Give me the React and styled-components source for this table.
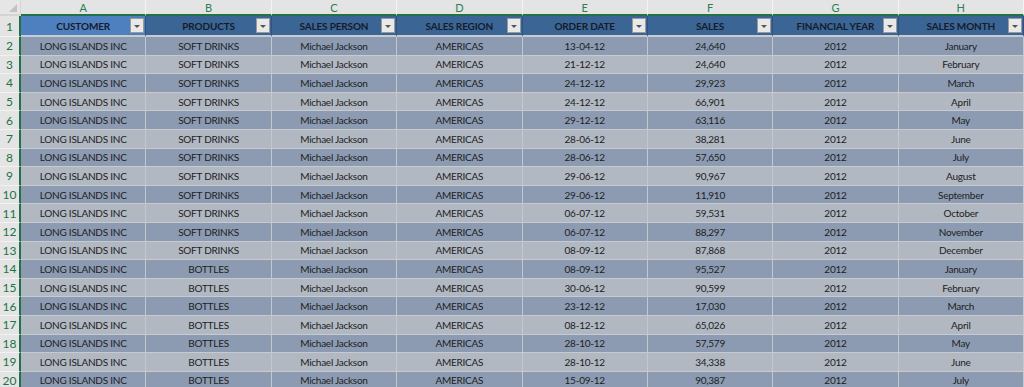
import React from "react";
import styled, { createGlobalStyle } from "styled-components";

const GlobalStyle = createGlobalStyle`
  html, body {
    margin: 0;
    padding: 0;
    background: #ffffff;
    overflow: hidden;
  }
  body {
    font-family: Lato, "Open Sans", sans-serif;
  }
`;

const COLUMNS = [
  { letter: "A", title: "CUSTOMER" },
  { letter: "B", title: "PRODUCTS" },
  { letter: "C", title: "SALES PERSON" },
  { letter: "D", title: "SALES REGION" },
  { letter: "E", title: "ORDER DATE" },
  { letter: "F", title: "SALES" },
  { letter: "G", title: "FINANCIAL YEAR" },
  { letter: "H", title: "SALES MONTH" },
];

const raw = [
  ["SOFT DRINKS", "13-04-12", "24,640", "January"],
  ["SOFT DRINKS", "21-12-12", "24,640", "February"],
  ["SOFT DRINKS", "24-12-12", "29,923", "March"],
  ["SOFT DRINKS", "24-12-12", "66,901", "April"],
  ["SOFT DRINKS", "29-12-12", "63,116", "May"],
  ["SOFT DRINKS", "28-06-12", "38,281", "June"],
  ["SOFT DRINKS", "28-06-12", "57,650", "July"],
  ["SOFT DRINKS", "29-06-12", "90,967", "August"],
  ["SOFT DRINKS", "29-06-12", "11,910", "September"],
  ["SOFT DRINKS", "06-07-12", "59,531", "October"],
  ["SOFT DRINKS", "06-07-12", "88,297", "November"],
  ["SOFT DRINKS", "08-09-12", "87,868", "December"],
  ["BOTTLES", "08-09-12", "95,527", "January"],
  ["BOTTLES", "30-06-12", "90,599", "February"],
  ["BOTTLES", "23-12-12", "17,030", "March"],
  ["BOTTLES", "08-12-12", "65,026", "April"],
  ["BOTTLES", "28-10-12", "57,579", "May"],
  ["BOTTLES", "28-10-12", "34,338", "June"],
  ["BOTTLES", "15-09-12", "90,387", "July"],
];

const rows = raw.map(([product, date, sales, month]) => [
  "LONG ISLANDS INC",
  product,
  "Michael Jackson",
  "AMERICAS",
  date,
  sales,
  "2012",
  month,
]);

const App = () => {
  return (
    <>
      <GlobalStyle />
      <Sheet>
        <Row>
          <Corner>
            <CornerMark />
          </Corner>
          {COLUMNS.map((c) => (
            <ColLetter key={c.letter}>{c.letter}</ColLetter>
          ))}
        </Row>
        <HeadRow>
          <RowNum>1</RowNum>
          {COLUMNS.map((c, i) => (
            <HeadCell key={c.letter} $active={i === 0}>
              <span>{c.title}</span>
              <FilterButton>
                <Caret />
              </FilterButton>
            </HeadCell>
          ))}
        </HeadRow>
        {rows.map((r, i) => (
          <DataRow key={i}>
            <RowNum>{i + 2}</RowNum>
            {r.map((v, j) => (
              <Cell key={j} $dark={i % 2 === 0}>
                {v}
              </Cell>
            ))}
          </DataRow>
        ))}
      </Sheet>
    </>
  );
};

export default App;

const Sheet = styled.div`
  width: 1024px;
  height: 387px;
  overflow: hidden;
  background: #ffffff;
`;

const Row = styled.div`
  display: grid;
  grid-template-columns: 21px repeat(8, 1fr);
  height: 16px;
`;

const HeadRow = styled(Row)`
  height: 21px;
`;

const DataRow = styled(Row)`
  height: 18.6px;
`;

const Corner = styled.div`
  position: relative;
  background: #e6e6e6;
  border-right: 1px solid #d4d4d4;
  border-bottom: 2px solid #d4d4d4;
  box-sizing: border-box;
`;

const CornerMark = styled.div`
  position: absolute;
  right: 3px;
  bottom: 2px;
  width: 0;
  height: 0;
  border-left: 8px solid transparent;
  border-bottom: 8px solid #c2c2c2;
`;

const ColLetter = styled.div`
  display: flex;
  align-items: center;
  justify-content: center;
  box-sizing: border-box;
  background: #e4e4e4;
  border-right: 1px solid #f4f4f4;
  border-bottom: 2px solid #217346;
  color: #2e7d55;
  font-family: Lato, sans-serif;
  font-size: 11px;
  padding-top: 1px;
`;

const RowNum = styled.div`
  display: flex;
  align-items: center;
  justify-content: center;
  box-sizing: border-box;
  background: #e4e4e4;
  border-right: 2px solid #217346;
  border-bottom: 1px solid #f2f2f2;
  color: #217346;
  font-family: Lato, sans-serif;
  font-size: 12px;
`;

const HeadCell = styled.div`
  display: flex;
  align-items: center;
  justify-content: center;
  position: relative;
  box-sizing: border-box;
  background: ${(p) => (p.$active ? "#4e80c0" : "#3b6595")};
  border-bottom: 2px solid #c7ccd2;
  border-right: 1px solid #2f5480;
  color: #151b2a;
  font-family: Lato, sans-serif;
  font-weight: 700;
  font-size: 10px;
  letter-spacing: -0.15px;
  padding-right: 14px;
  span {
    padding-left: 14px;
  }
`;

const FilterButton = styled.div`
  position: absolute;
  right: 1px;
  top: 2px;
  width: 14px;
  height: 15px;
  box-sizing: border-box;
  background: #e9e9e9;
  border: 1px solid #9a9a9a;
  display: flex;
  align-items: center;
  justify-content: center;
`;

const Caret = styled.div`
  width: 0;
  height: 0;
  border-left: 3px solid transparent;
  border-right: 3px solid transparent;
  border-top: 3px solid #555555;
  margin-top: 1px;
`;

const Cell = styled.div`
  display: flex;
  align-items: center;
  justify-content: center;
  box-sizing: border-box;
  background: ${(p) => (p.$dark ? "#8c9bb2" : "#b1b8c2")};
  border-right: 1px solid #c3c8cf;
  border-bottom: 1px solid #c6cbd1;
  color: #1d1d1d;
  font-family: Lato, sans-serif;
  font-size: 10px;
  letter-spacing: -0.25px;
  white-space: nowrap;
`;
